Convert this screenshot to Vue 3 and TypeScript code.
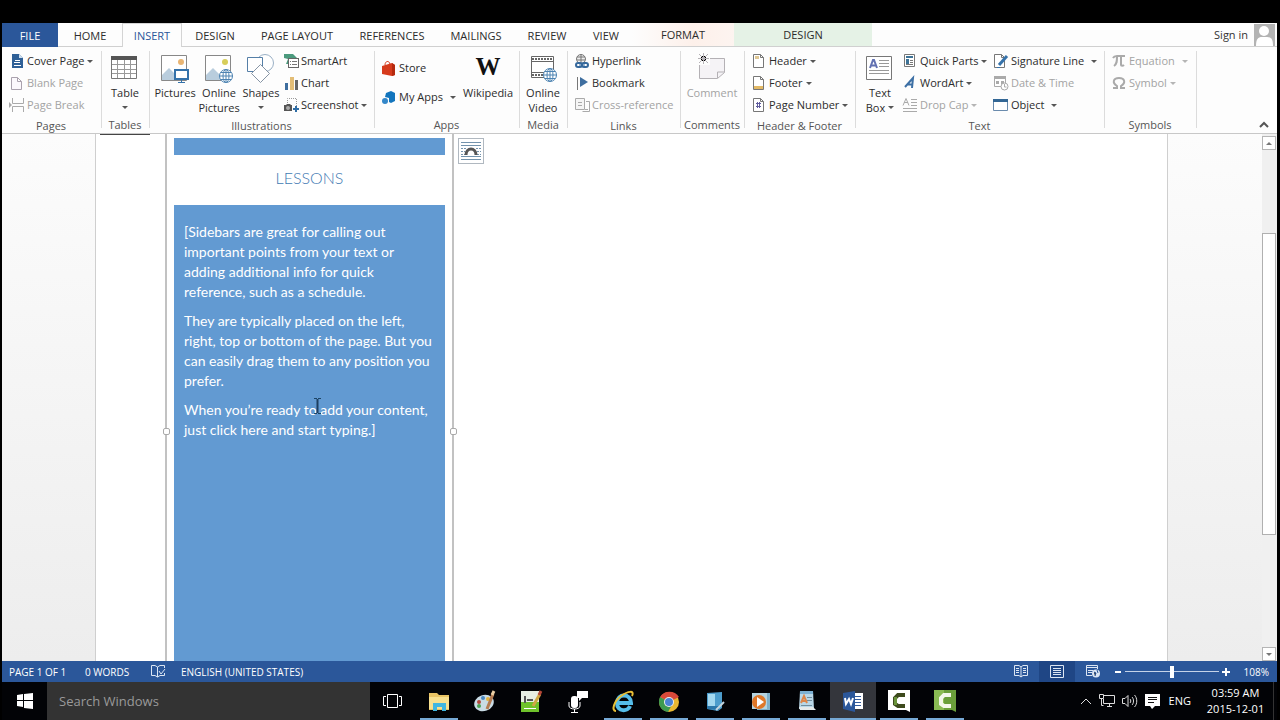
<script setup lang="ts">
import { ref } from 'vue'

interface Command {
  icon: string
  label: string
  off?: boolean
  caret?: 'near' | 'far'
}

const icons: Record<string, string> = {
  cover: '<path fill="#2f6097" d="M3 1h7l4 4v10H3z"/><path fill="#cfe0f0" d="M10 1v4h4z"/><path stroke="#fff" d="M6 7.500h5M5 9.500h6M5 12.500h7"/>',
  blank: '<path fill="#fbf8fc" stroke="#aaa2ae" d="M2.500 2.500h6l4 4v8h-10zM8.500 2.500v4h4"/>',
  pagebreak: '<path fill="none" stroke="#aaa" d="M3.500 1v5.500h11V1M3.500 15V9.500h11V15"/><path fill="#aaa" d="M0 5l3 3-3 3z"/>',
  smartart: '<path fill="#4b9a7d" d="M1 1h9l4 4-2 1H6v5H3l2-5-4-1z"/><rect x="5.500" y="5.500" width="10" height="9" fill="#fff" stroke="#666"/><path stroke="#777" d="M7 8.500h1M9 8.500h5M7 11.500h1M9 11.500h5"/>',
  chart: '<path fill="#3e6e9f" d="M2 8h3v7H2z"/><path fill="#e3bd76" d="M7 2h4v13H7z"/><path fill="#666" d="M12 5h3v10h-3z"/>',
  screenshot: '<path fill="none" stroke="#999" stroke-dasharray="1 1" d="M4.500 8V1.500h9V9"/><path fill="#555" d="M1 8h2l1-1h3l1 1h1v6H1z"/><circle cx="5" cy="11" r="2" fill="#aaa"/><path stroke="#2f6da5" stroke-width="2" d="M13 9v6M10 12h6"/>',
  store: '<path fill="#d63b1c" d="M1 6l10-3 3 2v10l-3 1L1 14z"/><path fill="#b52a0f" d="M11 3l3 2v10l-3 1z"/><path fill="none" stroke="#d63b1c" d="M4 5c0-4 4-5 5-1"/>',
  myapps: '<path fill="#1375bd" d="M5 4l5-2 4 2v8l-4 2-2-1V9L4 8z"/><circle cx="4" cy="12" r="3" fill="#3487c9"/>',
  hyperlink: '<circle cx="7" cy="6" r="4.500" fill="#eee" stroke="#777"/><path fill="none" stroke="#777" d="M7 1v10M3 4h8M3 7h8"/><rect x="2" y="10" width="6" height="4" rx="2" fill="#fff" stroke="#35689c" stroke-width="2"/><rect x="8" y="10" width="6" height="4" rx="2" fill="#fff" stroke="#35689c" stroke-width="2"/><path stroke="#35689c" d="M5 12h6"/>',
  bookmark: '<path stroke="#777" d="M3.500 2v13"/><path fill="#3e6e9f" d="M6 2l8 5-8 5z"/>',
  crossref: '<path fill="#f5f5f5" stroke="#aaa" d="M1.500 1.500h9v11h-9z"/><path fill="none" stroke="#aaa" d="M4 5.500h4M4 8.500h4M12 4.500h3.500v10h-7M11 12.500h3"/>',
  header: '<path fill="#fff" stroke="#777" d="M2.500 1.500h7l3 3v10h-10zM9.500 1.500v3h3"/><path fill="#dfc793" d="M4 3h4v3H4z"/>',
  footer: '<path fill="#fff" stroke="#777" d="M2.500 1.500h7l3 3v10h-10zM9.500 1.500v3h3"/><path fill="#e3b965" d="M3 11h9v3H3z"/>',
  pagenumber: '<path fill="#fff" stroke="#777" d="M2.500 1.500h7l3 3v10h-10zM9.500 1.500v3h3"/><path fill="none" stroke="#5e5b9c" d="M6.500 5v6M8.500 5v6M5 6.500h5M5 9.500h5"/>',
  quickparts: '<path fill="#fff" stroke="#777" d="M2.500 1.500h10v12h-10z"/><path fill="#3e7397" d="M4 3h7v2H4zM4 6h3v5H4z"/><path stroke="#777" d="M8 7.500h3M8 9.500h3M4 11.500h7"/>',
  wordart: '<path fill="none" stroke="#3d70a5" stroke-width="2" d="M3 12l8-9-1 10M5 9.500h6"/>',
  dropcap: '<path fill="none" stroke="#aaa" d="M1 8.500l3-7 3 7M2 5.500h4M9 2.500h6M9 5.500h6M9 8.500h6M1 11.500h14M1 14.500h14"/>',
  signature: '<path fill="#fff" stroke="#777" d="M1.500 1.500h7l3 3v10h-10zM8.500 1.500v3h3"/><path stroke="#3672aa" stroke-width="3" d="M6 12l8-9"/><path stroke="#3672aa" d="M4 14.500h3"/>',
  date: '<path fill="#fff" stroke="#aaa" d="M1.500 2.500h11v9h-11z"/><path fill="#aaa" d="M1 1h12v3H1zM3 6h3v3H3zM8 6h3v3H8z"/><circle cx="11.500" cy="11.500" r="3.500" fill="#fff" stroke="#aaa"/><path fill="none" stroke="#aaa" d="M11.500 9v3h2"/>',
  object: '<path fill="#fff" stroke="#6a8bad" d="M.5 2.500h14v11H.5z"/><path fill="#336795" d="M0 2h15v3H0z"/>',
  pi: '<path fill="none" stroke="#aaa" stroke-width="2" d="M2 5c1-2 2-2 4-2h8M6 4c0 4 0 7-3 9M10 4v8c0 1 2 1 3 0"/>',
  omega: '<path fill="none" stroke="#aaa" stroke-width="2" d="M2 13h4v-2C1 8 2 3 8 3s7 5 2 8v2h4"/>',
  table: '<path fill="#fff" stroke="#777" d="M1.500 3.500h25v22h-25z"/><path fill="#555" d="M1 3h26v4H1z"/><path fill="none" stroke="#999" d="M7.500 7v18M14.500 7v18M20.500 7v18M2 11.500h24M2 16.500h24M2 20.500h24"/>',
  pictures: '<path fill="#fff" stroke="#888" d="M1.500 2.500h25v25h-25z"/><path fill="#b9cddd" d="M2 27V22l7-7 8 8v4z"/><circle cx="21" cy="9" r="3" fill="#e9b573"/><path fill="#fff" stroke="#3472aa" stroke-width="2" d="M15 17h13v9H15z"/><path stroke="#3472aa" d="M21.500 26v3M18 29.500h7"/>',
  online: '<path fill="#fff" stroke="#888" d="M1.500 2.500h25v25h-25z"/><path fill="#b9cddd" d="M2 27V22l7-7 8 8v4z"/><circle cx="21" cy="9" r="3" fill="#d7ce5b"/><g fill="#fff" stroke="#4d83b2"><circle cx="22" cy="23" r="6.500"/><ellipse cx="22" cy="23" rx="3" ry="6.500"/><path d="M15.500 23h13M17 19.500h10M17 26.500h10M22 16v14"/></g>',
  shapes: '<circle cx="19" cy="10" r="8.500" fill="#fff" stroke="#9ab0c5"/><path fill="#fff" stroke="#557fa7" d="M1.500 4.500h15v14h-15z"/><path fill="#fff" stroke="#8795a5" d="M14.500 11.500l9 9-9 9-9-9z"/>',
  video: '<path fill="#fff" stroke="#666" d="M3.500 3.500h22v21h-22z"/><path stroke="#666" stroke-width="2" stroke-dasharray="2 1" d="M4 6h21M4 22h21"/><path fill="none" stroke="#666" d="M4 8.500h21M4 19.500h21"/><g fill="#fff" stroke="#4d83b2"><circle cx="22" cy="22" r="6.500"/><ellipse cx="22" cy="22" rx="3" ry="6.500"/><path d="M15.500 22h13M17 18.500h10M17 25.500h10M22 15v14"/></g>',
  comment: '<path fill="#f5f3f6" stroke="#b4b1b5" d="M2.500 5.500h25v14l-7 6h-18zM20.500 25v-6h7"/><path stroke="#fdfdfd" stroke-width="4" d="M2 1h9v9H2z"/><path stroke="#b4b1b5" d="M6.500 0v11M1 5.500h11M2 1l9 9M11 1l-9 9"/>',
  textbox: '<path fill="#fff" stroke="#777" d="M1.500 3.500h25v23h-25z"/><path fill="none" stroke="#6372b2" stroke-width="2" d="M5 15l3-8h1l3 8M6 12.500h5"/><path stroke="#999" d="M14 7.500h10M14 10.500h10M14 13.500h10M4 17.500h20M4 20.500h20"/>',
}

const tabs = [
  { name: 'HOME', cls: 'w64' },
  { name: 'INSERT', cls: 'w60 current' },
  { name: 'DESIGN', cls: 'w66' },
  { name: 'PAGE LAYOUT', cls: 'w98' },
  { name: 'REFERENCES', cls: 'w92' },
  { name: 'MAILINGS', cls: 'w76' },
  { name: 'REVIEW', cls: 'w66' },
  { name: 'VIEW', cls: 'w52' },
  { name: 'FORMAT', cls: 'w102 format' },
  { name: 'DESIGN', cls: 'w138 design' },
]

const pages: Command[] = [
  { icon: 'cover', label: 'Cover Page', caret: 'near' },
  { icon: 'blank', label: 'Blank Page', off: true },
  { icon: 'pagebreak', label: 'Page Break', off: true },
]
const art: Command[] = [
  { icon: 'smartart', label: 'SmartArt' },
  { icon: 'chart', label: 'Chart' },
  { icon: 'screenshot', label: 'Screenshot', caret: 'near' },
]
const apps: Command[] = [
  { icon: 'store', label: 'Store' },
  { icon: 'myapps', label: 'My Apps', caret: 'far' },
]
const links: Command[] = [
  { icon: 'hyperlink', label: 'Hyperlink' },
  { icon: 'bookmark', label: 'Bookmark' },
  { icon: 'crossref', label: 'Cross-reference', off: true },
]
const headers: Command[] = [
  { icon: 'header', label: 'Header', caret: 'near' },
  { icon: 'footer', label: 'Footer', caret: 'near' },
  { icon: 'pagenumber', label: 'Page Number', caret: 'near' },
]
const textA: Command[] = [
  { icon: 'quickparts', label: 'Quick Parts', caret: 'near' },
  { icon: 'wordart', label: 'WordArt', caret: 'near' },
  { icon: 'dropcap', label: 'Drop Cap', off: true, caret: 'near' },
]
const textB: Command[] = [
  { icon: 'signature', label: 'Signature Line', caret: 'far' },
  { icon: 'date', label: 'Date & Time', off: true },
  { icon: 'object', label: 'Object', caret: 'far' },
]
const symbols: Command[] = [
  { icon: 'pi', label: 'Equation', off: true, caret: 'far' },
  { icon: 'omega', label: 'Symbol', off: true, caret: 'near' },
]

interface Big {
  icon: string
  lines: string[]
  caret?: 'below' | 'inline'
  off?: boolean
}
interface Group {
  name: string
  cls: string
  big: Big[]
  lists: Command[][]
}
const groups: Group[] = [
  { name: 'Pages', cls: 'g-pages', big: [], lists: [pages] },
  { name: 'Tables', cls: 'g-tables', big: [{ icon: 'table', lines: ['Table'], caret: 'below' }], lists: [] },
  {
    name: 'Illustrations',
    cls: 'g-art',
    big: [
      { icon: 'pictures', lines: ['Pictures'] },
      { icon: 'online', lines: ['Online', 'Pictures'] },
      { icon: 'shapes', lines: ['Shapes'], caret: 'below' },
    ],
    lists: [art],
  },
  { name: 'Apps', cls: 'g-apps', big: [{ icon: 'wiki', lines: ['Wikipedia'] }], lists: [apps] },
  { name: 'Media', cls: 'g-tables', big: [{ icon: 'video', lines: ['Online', 'Video'] }], lists: [] },
  { name: 'Links', cls: 'g-links', big: [], lists: [links] },
  { name: 'Comments', cls: 'g-comments', big: [{ icon: 'comment', lines: ['Comment'], off: true }], lists: [] },
  { name: 'Header & Footer', cls: 'g-headers', big: [], lists: [headers] },
  { name: 'Text', cls: 'g-text', big: [{ icon: 'textbox', lines: ['Text', 'Box'], caret: 'inline' }], lists: [textA, textB] },
  { name: 'Symbols', cls: 'g-symbols', big: [], lists: [symbols] },
]

const programs = [
  { name: 'File Explorer', open: true, art: '<path fill="#e9c464" d="M2 4h8l2 2h10v15H2z"/><path fill="#f8e08f" d="M2 8h20v12H2z"/><path fill="#41b6e0" d="M6 14h13v8h-4v-4h-5v4H6z"/>' },
  { name: 'Paint', open: false, art: '<ellipse cx="11" cy="14" rx="10" ry="8" fill="#c9dbe4" transform="rotate(-20 11 14)"/><circle cx="6" cy="13" r="2" fill="#b0483b"/><circle cx="10" cy="9" r="2" fill="#4b87bf"/><circle cx="6" cy="17" r="2" fill="#4aa051"/><circle cx="15" cy="10" r="2" fill="#e4b33d"/><path stroke="#b47b51" stroke-width="3" d="M14 20l6-15"/><path stroke="#ebcfa4" stroke-width="3" d="M19 6l2-4"/>' },
  { name: 'Editor', open: false, art: '<path fill="#e8efe4" d="M2 2h18v21H2z"/><path fill="#6fc22b" d="M2 13h18v10H2z"/><path stroke="#555" stroke-width="2" d="M6 7v7M8 11h6"/><path stroke="#d0a844" stroke-width="3" d="M14 17l7-12"/><path stroke="#b44637" stroke-width="3" d="M20 6l2-4"/><path stroke="#fff" d="M5 19.500h12"/>' },
  { name: 'Speech Recognition', open: false, art: '<path fill="#fff" d="M12 2h11v7h-6l-3 3V9h-2z"/><rect x="6" y="7" width="7" height="12" rx="3" fill="#fff"/><path fill="none" stroke="#fff" d="M4 13v4c0 4 11 4 11 0v-4M9.500 20v3M6 23.500h7"/>' },
  { name: 'Internet Explorer', open: true, art: '<path fill="none" stroke="#55bde9" stroke-width="4" d="M6 14h14c0-10-14-10-14 0 0 9 11 9 13 3"/><path fill="none" stroke="#e9bf36" stroke-width="2" d="M5 22c-5 0-2-10 5-15S24 1 21 7"/>' },
  { name: 'Chrome', open: true, art: '<circle cx="12" cy="13" r="10" fill="#e9b831"/><path fill="#d9493a" d="M12 13L3 8c4-7 15-7 19 0z"/><path fill="#3d9a50" d="M12 13L3 8c-3 7 1 14 8 15l5-9z"/><circle cx="12" cy="13" r="5" fill="#eee"/><circle cx="12" cy="13" r="4" fill="#4a83d4"/>' },
  { name: 'Notebook', open: true, art: '<path fill="#4d9dcc" d="M4 4l15-1v16l-4 3-11-2z"/><path fill="#a4d8ef" d="M5 5h7v12H5z"/><path fill="#2c77aa" d="M4 17h12v4L4 20z"/><path stroke="#c3d5de" stroke-width="2" d="M13 21l8-8"/>' },
  { name: 'Media Player', open: true, art: '<path fill="#7fb1ca" d="M8 4h13v17H8z"/><path fill="#b6d4df" d="M3 4h15v16H3z"/><circle cx="10" cy="13" r="7" fill="#df7829"/><path fill="#fff" d="M8 8l7 5-7 5z"/>' },
  { name: 'WordPad', open: true, art: '<path fill="#b9d7e7" d="M5 2h13l1 18H4z"/><path fill="#7cb0d2" d="M5 2h13v3H5z"/><path fill="none" stroke="#dd8548" stroke-width="2" d="M6 14l3-7 3 7M7 12h4"/><path stroke="#718d9d" d="M12 8.500h5M12 11.500h5M6 16.500h11"/><path fill="#e5e9e9" d="M4 18h14l3 3H5z"/>' },
  { name: 'Word', open: true, art: '<path fill="#fff" d="M12 4h10v16H12z"/><path stroke="#315a9c" d="M14 7.500h6M14 10.500h6M14 13.500h6M14 16.500h6"/><path fill="#2b579a" d="M2 4l12-2v21L2 20z"/><path fill="none" stroke="#fff" stroke-width="2" d="M4 9l1 6 3-5 2 5 2-6"/>' },
  { name: 'Camtasia Recorder', open: true, art: '<path fill="#fff" d="M1 1h22v22l-4-2H1z"/><path fill="none" stroke="#3d4a1d" stroke-width="4" d="M18 6h-7L8 9v6l3 2h7"/><path fill="#6a943b" d="M7 8h3v8H7z"/>' },
  { name: 'Camtasia Studio', open: true, art: '<path fill="#6a9e3a" d="M1 1h22v22l-4-2H1z"/><path fill="#8abb53" d="M1 1h10v20H1z"/><path fill="none" stroke="#f3f7ea" stroke-width="4" d="M18 6h-7L8 9v6l3 2h7"/>' },
]

const zoom = ref(50)
</script>

<template>
  <div class="screen">
    <main class="word">
      <nav class="tabs">
        <button class="tab file">FILE</button>
        <button v-for="(t, i) in tabs" :key="i" class="tab" :class="t.cls">{{ t.name }}</button>
        <span class="account">
          <a href="#" class="signin">Sign in</a>
          <svg class="avatar" width="21" height="22" viewBox="0 0 21 22"><path fill="#b3b3b3" d="M0 0h21v22H0z" /><circle cx="10" cy="7" r="5" fill="#fff" /><path fill="#fff" d="M2 22c0-7 2-9 6-9h5c4 0 6 2 6 9z" /></svg>
        </span>
      </nav>

      <div class="ribbon">
        <section v-for="g in groups" :key="g.name" class="group" :class="g.cls">
          <div class="tools">
            <button v-for="b in g.big" :key="b.icon" class="big" :class="[b.icon, { off: b.off }]">
              <span v-if="b.icon === 'wiki'" class="wikimark">W</span>
              <svg v-else width="30" height="32" viewBox="0 0 30 32" v-html="icons[b.icon]"></svg>
              <span v-for="(l, i) in b.lines" :key="l" class="line">{{ l }}<i v-if="b.caret === 'inline' && i === 1" class="caret"></i></span>
              <i v-if="b.caret === 'below'" class="caret low"></i>
            </button>
            <div v-for="(list, i) in g.lists" :key="i" class="list">
              <button v-for="c in list" :key="c.label" class="cmd" :class="{ off: c.off }">
                <svg width="16" height="16" viewBox="0 0 16 16" v-html="icons[c.icon]"></svg>
                <span>{{ c.label }}</span>
                <i v-if="c.caret" class="caret" :class="c.caret"></i>
              </button>
            </div>
          </div>
          <h2>{{ g.name }}</h2>
        </section>
        <button class="collapse" aria-label="Collapse the ribbon">
          <svg width="10" height="8" viewBox="0 0 10 8"><path fill="none" stroke="#555" stroke-width="2" d="M1 6l4-4 4 4" /></svg>
        </button>
      </div>

      <div class="workspace">
        <div class="canvas">
          <article class="page">
            <div class="gutter"></div>
            <aside class="frame">
              <div class="strip"></div>
              <h1>LESSONS</h1>
              <div class="note">
                <p>[Sidebars are great for calling out<br />important points from your text or<br />adding additional info for quick<br />reference, such as a schedule.</p>
                <p>They are typically placed on the left,<br />right, top or bottom of the page. But you<br />can easily drag them to any position you<br />prefer.</p>
                <p>When you’re ready to add your content,<br />just click here and start typing.]</p>
              </div>
              <i class="handle left"></i>
              <i class="handle right"></i>
              <svg class="ibeam" width="7" height="16" viewBox="0 0 7 16"><path fill="none" stroke="#1d4566" d="M0 .5h3M4 .5h3M0 15.500h3M4 15.500h3" /><path stroke="#1d3f60" stroke-width="2" d="M3.500 1v14" /></svg>
            </aside>
            <button class="layout" aria-label="Layout options">
              <svg width="20" height="20" viewBox="0 0 20 20"><path stroke="#7393ad" d="M0 1.500h20M0 4.500h20M0 15.500h20M0 18.500h20" /><path stroke="#7393ad" stroke-dasharray="2 1" d="M0 7.500h5M15 7.500h5M0 10.500h4M16 10.500h4M0 13.500h4M16 13.500h4" /><path fill="none" stroke="#555" stroke-width="3" d="M5 14c0-8 10-8 10 0" /></svg>
            </button>
          </article>
        </div>
        <div class="scroll">
          <button aria-label="Scroll up"><i class="caret up"></i></button>
          <div class="rail"><span class="space a"></span><span class="thumb"></span><span class="space b"></span></div>
          <button aria-label="Scroll down"><i class="caret"></i></button>
        </div>
      </div>

      <footer class="status">
        <span class="count">PAGE 1 OF 1</span>
        <span class="words">0 WORDS</span>
        <svg class="proof" width="15" height="13" viewBox="0 0 15 13"><path fill="none" stroke="#dce6f3" d="M6.500 2L4 .5H.5v10H4l2.500 1.500zM6.500 2L9 .5h4.500V3M13.500 8v2.500H9L6.500 12M8 6l2 3 4-5" /></svg>
        <span class="lang">ENGLISH (UNITED STATES)</span>
        <span class="view"><svg width="14" height="13" viewBox="0 0 14 13"><path fill="none" stroke="#dce6f3" d="M7 2L5 .5H.5v10H5L7 12l2-1.500h4.500V.5H9L7 2v10M2 3.500h3M2 5.500h3M2 7.500h3M9 3.500h3M9 5.500h3M9 7.500h3" /></svg></span>
        <span class="view on"><svg width="14" height="13" viewBox="0 0 14 13"><path fill="none" stroke="#dce6f3" d="M.5.5h13v12H.5zM3 3.500h8M3 5.500h8M3 7.500h8M3 9.500h8" /></svg></span>
        <span class="view"><svg width="14" height="13" viewBox="0 0 14 13"><path fill="none" stroke="#dce6f3" d="M6 10.500H.5V.5h11V4M.5 2.500h11M2 5.500h5M2 7.500h4" /><circle cx="10" cy="8.500" r="4" fill="#dce6f3" /><path stroke="#2b579a" d="M8 7l2 1-1 3M11 5l1 3" /></svg></span>
        <button class="zoom" aria-label="Zoom out"><svg width="8" height="8" viewBox="0 0 8 8"><path stroke="#fff" stroke-width="2" d="M1 4h6" /></svg></button>
        <input v-model="zoom" class="slider" type="range" min="0" max="100" aria-label="Zoom" />
        <button class="zoom" aria-label="Zoom in"><svg width="8" height="8" viewBox="0 0 8 8"><path stroke="#fff" stroke-width="2" d="M0 4h8M4 0v8" /></svg></button>
        <span class="percent">108%</span>
      </footer>
    </main>

    <div class="taskbar">
      <button class="start" aria-label="Start">
        <svg width="16" height="16" viewBox="0 0 16 16"><path fill="#fff" d="M0 2l6-1v6H0zM7 1l9-1v7H7zM0 8h6v6l-6-1zM7 8h9v8l-9-1z" /></svg>
      </button>
      <input class="search" type="text" placeholder="Search Windows" aria-label="Search Windows" />
      <button class="taskview" aria-label="Task view">
        <svg width="20" height="14" viewBox="0 0 20 14"><path fill="none" stroke="#fff" d="M4.500.5h10v13h-10zM3 2.500H.5v9H3M16 2.500h2.500v9H16" /></svg>
      </button>
      <button v-for="p in programs" :key="p.name" class="program" :class="{ open: p.open, active: p.name === 'Word' }" :aria-label="p.name">
        <svg width="24" height="24" viewBox="0 0 24 24" v-html="p.art"></svg>
      </button>
      <div class="tray">
        <svg width="12" height="8" viewBox="0 0 12 8"><path fill="none" stroke="#ddd" d="M1 7l5-5 5 5" /></svg>
        <svg width="16" height="14" viewBox="0 0 16 14"><path fill="none" stroke="#ddd" d="M5 1.500h10.500v8H4.500V5M8 12.500h5M10.500 10v2M.5.5h4v4h-4zM2.500 5v6.500h2" /></svg>
        <svg width="16" height="14" viewBox="0 0 16 14"><path fill="none" stroke="#ddd" d="M.5 4.500H3l3-3v11l-3-3H.5zM8 5c1 1 1 3 0 4M10 3c2 2 2 6 0 8M12.500 1c3 3 3 9 0 12" /></svg>
        <svg width="15" height="15" viewBox="0 0 15 15"><path fill="#fff" d="M0 0h15v12H10l-3 3-2-3H0z" /><path stroke="#111" d="M3 3.500h9M3 5.500h9M3 8.500h6" /></svg>
        <span class="eng">ENG</span>
        <div class="clock"><span>03:59 AM</span><span>2015-12-01</span></div>
      </div>
    </div>
  </div>
</template>

<style>
body { margin: 0; background: #000; }
</style>

<style scoped>
* { box-sizing: border-box; }
button { border: 0; padding: 0; margin: 0; background: none; font: inherit; color: inherit; }
.screen {
  height: 100vh; min-height: 480px; display: flex; flex-direction: column; overflow: hidden;
  padding: 23px 3px 0 2px; background: #000; color: #2c2c2c;
  font: 11px/16px "Open Sans", "Noto Sans", sans-serif;
}
.word { flex: 1; min-height: 0; display: flex; flex-direction: column; background: #fdfdfd; }

.tabs { display: flex; height: 24px; flex: none; border-bottom: 1px solid #d0d0d0; }
.tab { flex: none; text-align: center; white-space: nowrap; height: 24px; padding-top: 1px; }
.file { width: 56px; background: #2b579a; color: #fff; }
.w52 { width: 52px; } .w60 { width: 60px; } .w64 { width: 64px; } .w66 { width: 66px; }
.w76 { width: 76px; } .w92 { width: 92px; } .w98 { width: 98px; } .w102 { width: 102px; } .w138 { width: 138px; }
.current { color: #2b579a; background: #fdfdfd; border: 1px solid #d4d4d4; border-bottom: 0; padding-top: 0; }
.format { height: 23px; background: linear-gradient(90deg, #fdfdfd, #fdf0ea 60%, #fdf4f0); }
.design { height: 23px; background: #e5f2e6; }
.account { flex: 1; display: flex; justify-content: flex-end; gap: 6px; padding-right: 2px; }
.signin { color: #333; text-decoration: none; line-height: 24px; }
.avatar { margin-top: 1px; }

.ribbon { display: flex; flex: none; height: 87px; border-bottom: 1px solid #c8c8c8; }
.group { flex: none; display: flex; flex-direction: column; position: relative; padding-right: 2px; }
.group::after { content: ""; position: absolute; right: 0; top: 4px; bottom: 5px; width: 1px; background: #dcdcdc; }
.tools { display: flex; height: 69px; padding-top: 3px; }
.group h2 { margin: 0; padding-top: 2px; font-size: 11px; font-weight: 400; line-height: 16px; text-align: center; color: #555; white-space: nowrap; }
.list { display: flex; flex-direction: column; }
.cmd { display: flex; align-items: center; height: 22px; white-space: nowrap; }
.cmd svg { margin-right: 2px; flex: none; }
.off { color: #a3a3a3; }
.caret { display: inline-block; flex: none; border: 3px solid transparent; border-top-color: currentColor; border-bottom: 0; margin-left: 3px; opacity: .8; }
.caret.far { margin-left: 7px; }
.caret.up { border-top: 0; border-bottom: 3px solid currentColor; }
.big { display: flex; flex-direction: column; align-items: center; padding-top: 3px; flex: none; width: 44px; line-height: 15px; white-space: nowrap; }
.line { display: flex; align-items: center; }
.caret.low { margin: 6px 0 0; }
.wikimark { height: 32px; font: bold 25px/28px "Liberation Serif", serif; color: #111; }

.g-pages { width: 100px; } .g-pages .tools { padding-left: 7px; }
.g-tables { width: 48px; } .g-tables .tools { justify-content: center; }
.g-art { width: 225px; } .g-art .tools { padding-left: 3px; }
.shapes { width: 40px; } .g-art .list { margin-left: 2px; }
.g-apps { width: 145px; } .g-apps .list { order: -1; padding: 7px 0 0 6px; width: 85px; gap: 7px; }
.wiki { width: 56px; }
.g-links { width: 113px; } .g-links .tools { padding-left: 6px; }
.g-comments { width: 64px; } .g-comments .tools { justify-content: center; }
.g-headers { width: 111px; } .g-headers .tools { padding-left: 6px; }
.g-text { width: 249px; } .g-text .tools { padding-left: 2px; }
.g-text .list { width: 91px; } .g-text .list:last-child { width: 110px; }
.g-symbols { width: 92px; } .g-symbols .tools { padding-left: 6px; }
.collapse { margin-left: auto; align-self: flex-end; padding: 0 8px; }

.workspace { flex: 1; min-height: 0; display: flex; }
.canvas { flex: 1; padding: 0 94px 0 93px; background: linear-gradient(#fcfcfc, #ededed); }
.page { height: 100%; display: flex; align-items: flex-start; background: #fff; border: 1px solid #cfcfcf; border-width: 0 1px; }
.gutter { width: 69px; height: 1px; border-left: 4px solid #fff; border-right: 15px solid #fff; background: #444; }
.frame { position: relative; width: 289px; height: 100%; display: flex; flex-direction: column; padding: 4px 7px 0; border: 2px solid #c2c2c2; border-width: 0 2px; font-family: Lato, sans-serif; }
.strip { height: 17px; flex: none; background: #629ad2; }
.frame h1 { margin: 0; height: 50px; flex: none; font-size: 16px; font-weight: 300; line-height: 46px; text-align: center; color: #3f7ab3; }
.note { flex: 1; min-height: 0; padding: 17px 10px 0; background: #629ad2; color: #fff; font-size: 14px; line-height: 20px; white-space: nowrap; }
.note p { margin: 0 0 9px; }
.handle { position: absolute; top: 294px; width: 7px; height: 7px; border: 1px solid #aaa; border-radius: 2px; background: #fff; }
.left { left: -4px; } .right { right: -5px; }
.ibeam { position: absolute; left: 147px; top: 264px; }
.layout { display: flex; align-items: center; justify-content: center; width: 26px; height: 26px; margin: 4px 0 0 4px; border: 1px solid #b0b8c0; background: #fff; }

.scroll { width: 15px; display: flex; flex-direction: column; background: #f0f0f0; padding: 2px 1px 0 0; }
.scroll button { height: 14px; flex: none; display: flex; align-items: center; justify-content: center; border: 1px solid #b5b5b5; background: #fff; color: #555; }
.scroll .caret { margin: 0; }
.rail { flex: 1; display: flex; flex-direction: column; }
.space.a { flex: 83; } .thumb { flex: 302; background: #fff; border: 1px solid #b0b0b0; } .space.b { flex: 112; }

.status { display: flex; align-items: center; height: 21px; flex: none; background: #2b579a; color: #fff; white-space: nowrap; font-size: 10px; }
.count { width: 83px; padding-left: 7px; }
.words { width: 66px; }
.proof { margin-right: 15px; }
.lang { flex: 1; }
.view { width: 36px; height: 21px; display: flex; align-items: center; justify-content: center; }
.on { background: #1f4685; }
.zoom { width: 8px; display: flex; margin-left: 3px; }
.slider { width: 94px; height: 14px; margin: 0 0 0 3px; appearance: none; background: linear-gradient(#c5d3e8, #c5d3e8) center / 100% 1px no-repeat; }
.slider::-webkit-slider-thumb { appearance: none; width: 4px; height: 12px; background: #fff; }
.percent { width: 47px; padding-right: 8px; text-align: right; }

.taskbar { display: flex; height: 38px; flex: none; background: #020306; color: #fff; }
.start { width: 45px; display: flex; align-items: center; justify-content: center; }
.search { width: 323px; border: 0; margin: 0; padding: 0 12px; background: #333; color: #fff; font: 13px "Open Sans", sans-serif; }
.search::placeholder { color: #9a9a9a; opacity: 1; }
.taskview { width: 46px; display: flex; align-items: center; justify-content: center; }
.program { width: 46px; flex: none; display: flex; align-items: center; justify-content: center; position: relative; }
.open::after { content: ""; position: absolute; left: 4px; right: 4px; bottom: 0; height: 2px; background: #76a9d5; }
.active { background: #34363c; }
.active::after { left: 0; right: 0; }
.tray { flex: 1; display: flex; align-items: center; justify-content: flex-end; gap: 7px; }
.eng { margin-left: 2px; }
.clock { width: 76px; height: 38px; margin-right: 3px; border-right: 1px solid #333; display: flex; flex-direction: column; justify-content: center; text-align: center; }
</style>
